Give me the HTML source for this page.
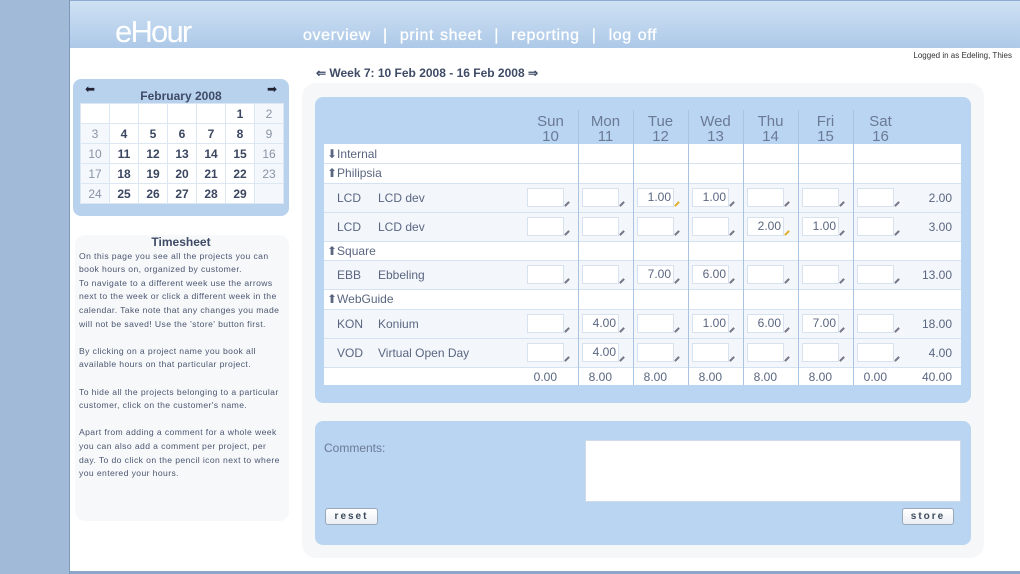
<!DOCTYPE html>
<html><head><meta charset="utf-8"><style>
*{margin:0;padding:0;box-sizing:border-box}
body{width:1020px;height:574px;overflow:hidden;background:#fff;font-family:"Liberation Sans",sans-serif;position:relative;color:#4a5670}
.abs{position:absolute}
#strip{left:0;top:0;width:70px;height:574px;background:#a1bad7;border-right:1px solid #7d98bb}
#hdr{left:70px;top:0;width:950px;height:48px;background:linear-gradient(#cfe1f3,#adc9e8);border-top:1px solid #8eabd0}
#logo{left:115px;top:14px;font-size:31px;color:#fff;letter-spacing:-1.8px}
#nav{left:303px;top:27px;font-size:16px;color:#fff;letter-spacing:0.6px;word-spacing:1px;-webkit-text-stroke:0.3px #fff}
#bot{left:70px;top:571px;width:950px;height:3px;background:#8aa6c9}
.cal{left:73px;top:79px;width:216px;height:137px;background:#b8d2ee;border-radius:8px}
.cal table{position:absolute;left:7px;top:24px;border-collapse:collapse}
.cal td{width:29px;height:20px;background:#fff;border:1px solid #dce7f4;text-align:center;font-size:12px;font-weight:bold;color:#3b4660}
.cal td.w{font-weight:normal;color:#8a93a5;background:#f4f8fc}
.help{left:75px;top:235px;width:214px;height:286px;background:#f7f8fa;border-radius:10px;font-size:8.6px;letter-spacing:0.4px;line-height:13.6px;padding:0 6px 0 4px;color:#4a5670}
.help h3{text-align:center;font-size:12px;letter-spacing:0;color:#3f4b66;margin:1px 0 0}
.outer{left:302px;top:83px;width:682px;height:475px;background:#f6f7f9;border-radius:14px}
.blue{left:315px;top:97px;width:656px;height:306px;background:#b9d5f1;border-radius:8px}
.tbl{left:324px;top:144px;width:637px;height:241px;background:#fff}
.row{position:absolute;left:324px;width:637px;background:#f3f7fc;border-top:1px solid #d4e2f1}
.cust{background:#fff}
.vl{position:absolute;top:110px;width:1px;height:275px;background:#a9c3e0}
.day{position:absolute;top:114px;width:55px;text-align:center;font-size:15px;line-height:15px;color:#6b7a95}
.t{position:absolute;font-size:12px;color:#5a6680}
.inp{position:absolute;width:37px;height:19px;background:#fff;border:1px solid #d8e2ee;font-size:12px;text-align:right;padding-right:2px;line-height:17px;color:#5a6680}
.pc{position:absolute;width:6px;height:2px;background:#778;transform:rotate(-45deg)}
.pc.y{background:#e0b030}
.num{position:absolute;font-size:12px;color:#5a6680;text-align:right;width:40px}
.comm{left:315px;top:421px;width:656px;height:124px;background:#b9d5f1;border-radius:8px}
.btn{position:absolute;height:17px;background:linear-gradient(#fff,#eaeef3);border:1px solid #9aa8ba;border-radius:3px;font-size:10px;font-weight:bold;letter-spacing:2px;text-align:center;line-height:15px;color:#3f4b5f}
</style></head><body>
<div class="abs" id="strip"></div>
<div class="abs" id="hdr"></div>
<div class="abs" id="logo">eHour</div>
<div class="abs" id="nav">overview &nbsp;|&nbsp; print sheet &nbsp;|&nbsp; reporting &nbsp;|&nbsp; log off</div>
<div class="abs" id="bot"></div>
<div class="abs" style="right:8px;top:51px;font-size:8px;color:#333">Logged in as Edeling, Thies</div>
<div class="abs" style="left:316px;top:66px;font-size:12px;font-weight:bold;color:#3f4b66">⇐ Week 7: 10 Feb 2008 - 16 Feb 2008 ⇒</div>

<div class="abs cal">
<div class="abs" style="left:12px;top:3px;font-size:12px;color:#223">⬅</div>
<div class="abs" style="left:0;width:216px;top:10px;text-align:center;font-size:12px;font-weight:bold;color:#3f4b66">February 2008</div>
<div class="abs" style="right:12px;top:3px;font-size:12px;color:#223">➡</div>
<table>
<tr><td></td><td></td><td></td><td></td><td></td><td>1</td><td class="w">2</td></tr>
<tr><td class="w">3</td><td>4</td><td>5</td><td>6</td><td>7</td><td>8</td><td class="w">9</td></tr>
<tr><td class="w">10</td><td>11</td><td>12</td><td>13</td><td>14</td><td>15</td><td class="w">16</td></tr>
<tr><td class="w">17</td><td>18</td><td>19</td><td>20</td><td>21</td><td>22</td><td class="w">23</td></tr>
<tr><td class="w">24</td><td>25</td><td>26</td><td>27</td><td>28</td><td>29</td><td class="w"></td></tr>
</table></div>

<div class="abs help"><h3>Timesheet</h3>
On this page you see all the projects you can book hours on, organized by customer.<br>To navigate to a different week use the arrows next to the week or click a different week in the calendar. Take note that any changes you made will not be saved! Use the 'store' button first.<br><br>By clicking on a project name you book all available hours on that particular project.<br><br>To hide all the projects belonging to a particular customer, click on the customer's name.<br><br>Apart from adding a comment for a whole week you can also add a comment per project, per day. To do click on the pencil icon next to where you entered your hours.</div>

<div class="abs outer"></div>
<div class="abs blue"></div>
<div class="abs tbl"></div>

<div class="row cust" style="top:144px;height:19px;border-top:none"></div>
<div class="row cust" style="top:163px;height:20px"></div>
<div class="row" style="top:183px;height:29px"></div>
<div class="row" style="top:212px;height:29px"></div>
<div class="row cust" style="top:241px;height:19px"></div>
<div class="row" style="top:260px;height:29px"></div>
<div class="row cust" style="top:289px;height:20px"></div>
<div class="row" style="top:309px;height:29px"></div>
<div class="row" style="top:338px;height:29px"></div>
<div class="row cust" style="top:367px;height:18px"></div>

<div class="vl" style="left:578px"></div><div class="vl" style="left:633px"></div><div class="vl" style="left:688px"></div><div class="vl" style="left:743px"></div><div class="vl" style="left:798px"></div><div class="vl" style="left:853px"></div>

<div class="day" style="left:523px">Sun<br>10</div>
<div class="day" style="left:578px">Mon<br>11</div>
<div class="day" style="left:633px">Tue<br>12</div>
<div class="day" style="left:688px">Wed<br>13</div>
<div class="day" style="left:743px">Thu<br>14</div>
<div class="day" style="left:798px">Fri<br>15</div>
<div class="day" style="left:853px">Sat<br>16</div>

<div class="t" style="left:327px;top:147px">⬇Internal</div>
<div class="t" style="left:327px;top:166px">⬆Philipsia</div>
<div class="t" style="left:327px;top:244px">⬆Square</div>
<div class="t" style="left:327px;top:292px">⬆WebGuide</div>
<div class="t" style="left:337px;top:191px">LCD</div><div class="t" style="left:378px;top:191px">LCD dev</div>
<div class="t" style="left:337px;top:220px">LCD</div><div class="t" style="left:378px;top:220px">LCD dev</div>
<div class="t" style="left:337px;top:268px">EBB</div><div class="t" style="left:378px;top:268px">Ebbeling</div>
<div class="t" style="left:337px;top:317px">KON</div><div class="t" style="left:378px;top:317px">Konium</div>
<div class="t" style="left:337px;top:346px">VOD</div><div class="t" style="left:378px;top:346px">Virtual Open Day</div>

<div id="cells"></div>
<script>
var rows=[[188,["","","1.00","1.00","","",""],"2.00",[2]],[217,["","","","","2.00","1.00",""],"3.00",[4]],[265,["","","7.00","6.00","","",""],"13.00",[]],[314,["","4.00","","1.00","6.00","7.00",""],"18.00",[]],[343,["","4.00","","","","",""],"4.00",[]]];
var h="";
rows.forEach(function(r){for(var i=0;i<7;i++){var x=527+55*i;h+='<div class="inp" style="left:'+x+'px;top:'+r[0]+'px">'+r[1][i]+'</div>';h+='<div class="pc'+(r[3].indexOf(i)>=0?' y':'')+'" style="left:'+(x+37)+'px;top:'+(r[0]+15)+'px"></div>';}
h+='<div class="num" style="left:912px;top:'+(r[0]+3)+'px">'+r[2]+'</div>';});
var tot=["0.00","8.00","8.00","8.00","8.00","8.00","0.00"];
for(var i=0;i<7;i++)h+='<div class="num" style="left:'+(527+55*i-10)+'px;top:370px">'+tot[i]+'</div>';
h+='<div class="num" style="left:912px;top:370px">40.00</div>';
document.getElementById("cells").innerHTML=h;
</script>

<div class="abs comm"></div>
<div class="abs" style="left:324px;top:441px;font-size:12px;color:#6b7a95">Comments:</div>
<div class="abs" style="left:585px;top:440px;width:376px;height:62px;background:#fff;border:1px solid #cfdbe8"></div>
<div class="btn" style="left:325px;top:508px;width:53px">reset</div>
<div class="btn" style="left:902px;top:508px;width:52px">store</div>
</body></html>
